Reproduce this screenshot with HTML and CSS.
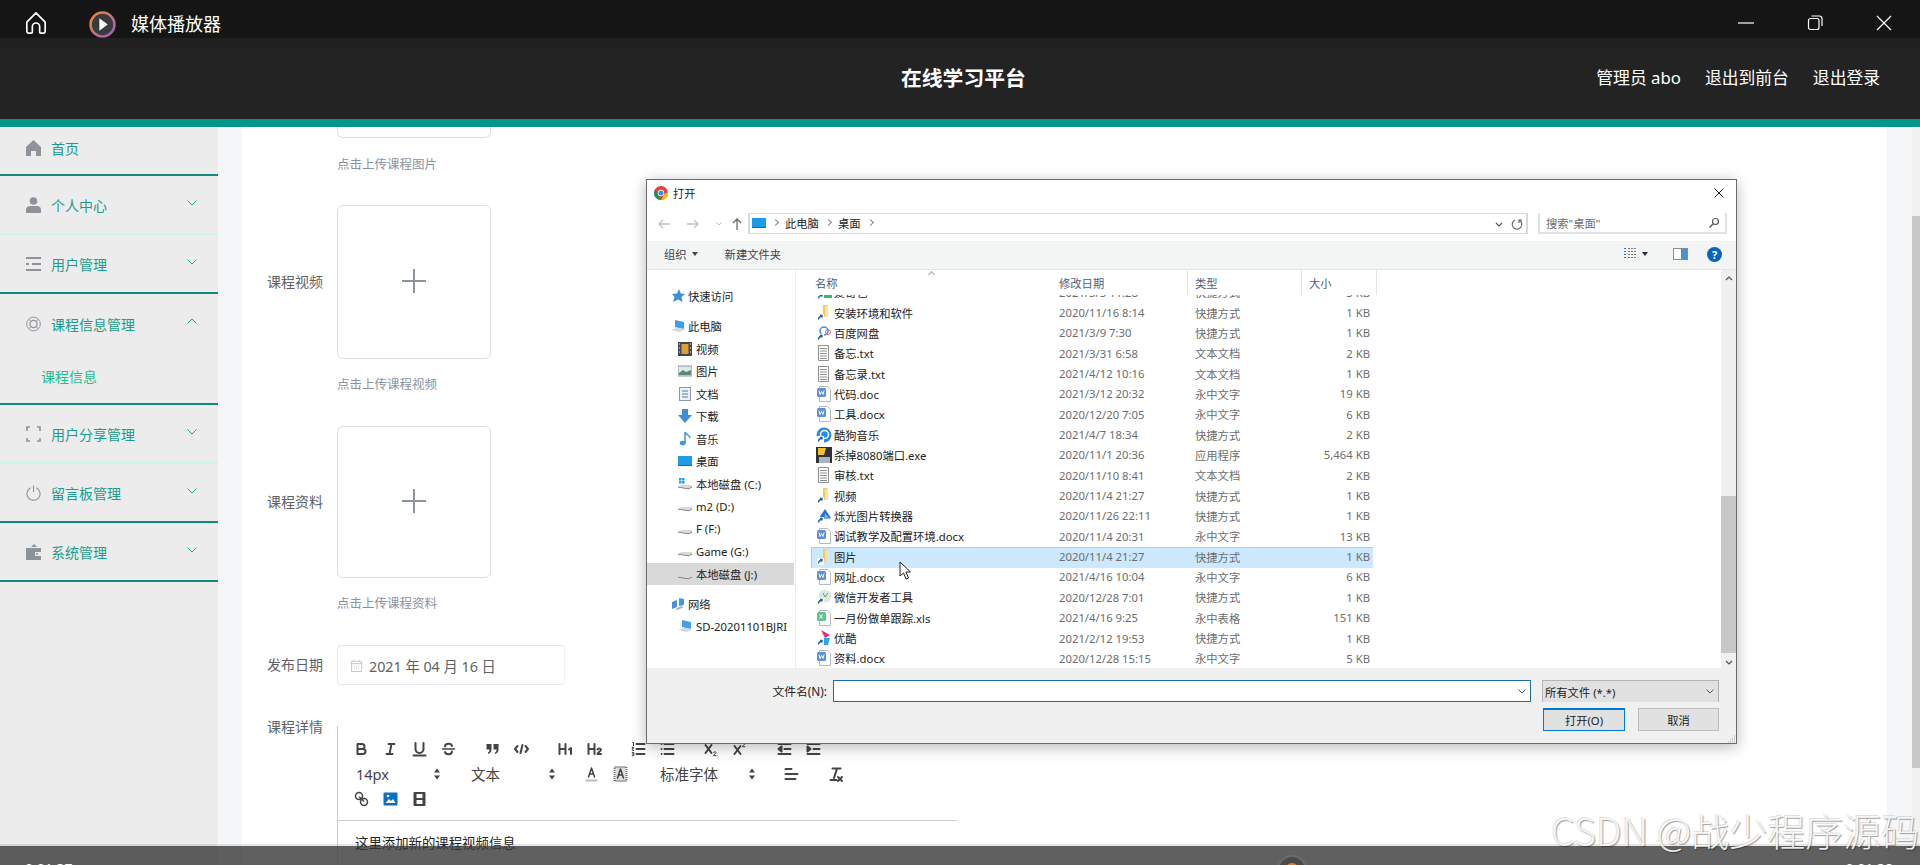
FILE: index.html
```html
<!DOCTYPE html>
<html lang="zh-CN">
<head>
<meta charset="utf-8">
<title>媒体播放器</title>
<link rel="stylesheet" href="styles.css">
</head>
<body>
<svg class="defs" width="0" height="0" aria-hidden="true">
  <symbol id="q-ol" viewBox="0 0 18 18"><path class="qs" d="M7 4h8M7 9h8M7 14h8"/><path class="qt" d="M3 2.500h1v3M2.600 7.500h1.600v1.200H2.800V10.400h1.500M2.700 12.500h1.600v3.200H2.700M2.900 14h1.300"/></symbol>
  <symbol id="q-ul" viewBox="0 0 18 18"><path class="qs" d="M6 4h9M6 9h9M6 14h9M3 4h.01M3 9h.01M3 14h.01"/></symbol>
  <symbol id="q-updown" viewBox="0 0 18 18"><path class="qf" d="M9 3.500l3 4H6zM9 14.500l-3-4h6z"/></symbol>
  <symbol id="f-short" viewBox="0 0 16 16"><path fill="#f3c95f" d="M7 0h4l1 1v11H7z"/><path fill="#fbe39c" d="M9 1h3v11H9z"/><rect x="1" y="9" width="7" height="7" fill="#fff"/><path d="M2.500 14.500c0-2 1-3 3-3M4 10.500h2v2" fill="none" stroke="#1c5fb0" stroke-width="1.300"/></symbol>
  <symbol id="f-word" viewBox="0 0 16 16"><path fill="#fff" stroke="#b4bac4" d="M3.500 .5h8l3 3v12h-11z"/><rect x="1" y="2" width="9" height="9" rx="1.500" fill="#5b8fe0"/><path d="M3 4.500l1 4 1.500-3 1.500 3 1-4" fill="none" stroke="#fff"/></symbol>
  <symbol id="f-xls" viewBox="0 0 16 16"><path fill="#fff" stroke="#b4bac4" d="M3.500 .5h8l3 3v12h-11z"/><rect x="1" y="2" width="9" height="9" rx="1.500" fill="#62c28e"/><path d="M3.500 4.500l3 4M6.500 4.500l-3 4" stroke="#fff"/></symbol>
  <symbol id="f-txt" viewBox="0 0 16 16"><path fill="#fff" stroke="#8f8f8f" d="M2.500 .5h10v15h-10z"/><path stroke="#8f8f8f" d="M4 3.500h7M4 6h7M4 8.500h7M4 11h7M4 13.500h7"/></symbol>
  <symbol id="f-lnk" viewBox="0 0 16 16"><rect x="1" y="9" width="7" height="7" fill="#fff"/><path d="M2.500 14.500c0-2 1-3 3-3M4 10.500h2v2" fill="none" stroke="#1c5fb0" stroke-width="1.300"/></symbol>
  <symbol id="d-drive" viewBox="0 0 16 16"><path fill="#d9d9d9" d="M0 11l4-2h12v3l-4 2z"/><path fill="#6d6d6d" d="M0 11l12 2 4-2v1l-4 2-12-2z"/></symbol>
  <symbol id="m-home" viewBox="0 0 15 16"><path fill="#8e929b" d="M7.500 0L15 7v9h-5v-5H5v5H0V7z"/></symbol>
  <symbol id="m-chev" viewBox="0 0 10 6"><path d="M.5.500l4.500 4.500 4.500-4.500" fill="none" stroke="#18a294"/></symbol>
</svg>

<div class="app">
  <div class="titlebar">
    <svg class="tb-home" viewBox="0 0 24 26"><path d="M2 12L12 2l10 10v10a2 2 0 0 1-2 2h-3a1 1 0 0 1-1-1v-6a4 4 0 0 0-8 0v6a1 1 0 0 1-1 1H4a2 2 0 0 1-2-2z" fill="none" stroke="#fff" stroke-width="1.800" stroke-linejoin="round"/></svg>
    <svg class="tb-logo" viewBox="0 0 26 26"><defs><linearGradient id="lg" x1="0" y1="0" x2="1" y2="1"><stop offset="0" stop-color="#f08a2c"/><stop offset="1" stop-color="#9a5ac8"/></linearGradient></defs><circle cx="13" cy="13" r="11.500" fill="#3a3a3e" stroke="url(#lg)" stroke-width="2.500"/><path d="M10 7l8 6-8 6z" fill="#fff"/></svg>
    <span class="tb-title">媒体播放器</span>
    <div class="tb-controls">
      <svg class="tb-ctl" viewBox="0 0 16 16"><path d="M0 8h16" stroke="#fff" stroke-width="1.200"/></svg>
      <svg class="tb-ctl" viewBox="0 0 16 16"><rect x="1.500" y="3.500" width="10.500" height="11" rx="2" fill="none" stroke="#fff" stroke-width="1.200"/><path d="M4.500 1h8a2.500 2.500 0 0 1 2.500 2.500V11" fill="none" stroke="#fff" stroke-width="1.200"/></svg>
      <svg class="tb-ctl" viewBox="0 0 16 16"><path d="M1 1l14 14M15 1L1 15" stroke="#fff" stroke-width="1.200"/></svg>
    </div>
  </div>
  <div class="strip"></div>
  <header class="site-header">
    <div class="site-title">在线学习平台</div>
    <nav class="site-links">
      <span>管理员 abo</span><span>退出到前台</span><span>退出登录</span>
    </nav>
  </header>
  <div class="teal"></div>

  <div class="body-row">
    <aside class="sidebar">
      <div class="menu-item first line-teal"><svg class="m-ico"><use href="#m-home"/></svg><span>首页</span></div>
      <div class="menu-item line-pale"><svg class="m-ico" viewBox="0 0 15 16"><circle cx="7.500" cy="4" r="3.800" fill="#8e929b"/><path d="M0 16v-3c0-3 2-4 4-4h7c2 0 4 1 4 4v3z" fill="#8e929b"/></svg><span>个人中心</span><svg class="chev"><use href="#m-chev"/></svg></div>
      <div class="menu-item line-teal"><svg class="m-ico" viewBox="0 0 15 16"><path d="M0 2h15M6 8h9M0 14h15M0 8h3" stroke="#8e929b" stroke-width="2"/></svg><span>用户管理</span><svg class="chev"><use href="#m-chev"/></svg></div>
      <div class="menu-group line-teal">
        <div class="menu-item bare"><svg class="m-ico" viewBox="0 0 16 16"><circle cx="8" cy="8" r="7.300" fill="none" stroke="#8e929b"/><circle cx="8" cy="8" r="3.800" fill="none" stroke="#8e929b" stroke-width="1.400"/><path d="M3 3l2.500 2.500M13 3l-2.500 2.500M3 13l2.500-2.500M13 13l-2.500-2.500" stroke="#8e929b"/></svg><span>课程信息管理</span><svg class="chev up"><use href="#m-chev"/></svg></div>
        <div class="menu-sub">课程信息</div>
      </div>
      <div class="menu-item line-pale"><svg class="m-ico" viewBox="0 0 15 16"><path d="M1 5V1h3M11 1h3v4M14 12v3h-3M4 15H1v-3" fill="none" stroke="#8e929b" stroke-width="1.600"/></svg><span>用户分享管理</span><svg class="chev"><use href="#m-chev"/></svg></div>
      <div class="menu-item line-teal"><svg class="m-ico" viewBox="0 0 16 16"><path d="M5 2.500a7 7 0 1 0 6 0M8 0v7" fill="none" stroke="#8e929b" stroke-width="1.200"/></svg><span>留言板管理</span><svg class="chev"><use href="#m-chev"/></svg></div>
      <div class="menu-item line-teal"><svg class="m-ico" viewBox="0 0 15 16"><path d="M0 4h15v12H0zM5 3l3-3 3 3z" fill="#8e929b"/><rect x="9" y="8" width="6" height="4" fill="#ececec"/><circle cx="11" cy="10" r="1" fill="#8e929b"/></svg><span>系统管理</span><svg class="chev"><use href="#m-chev"/></svg></div>
    </aside>
    <div class="gutter"></div>
    <main class="main">
      <form class="form">
        <div class="upload cut"></div>
        <div class="tip first-tip">点击上传课程图片</div>

        <div class="field">
          <label class="label">课程视频</label>
          <div class="upload"><svg class="plus" viewBox="0 0 24 24"><path d="M12 0v24M0 12h24" stroke="#8c939d" stroke-width="2"/></svg></div>
        </div>
        <div class="tip">点击上传课程视频</div>

        <div class="field">
          <label class="label">课程资料</label>
          <div class="upload short"><svg class="plus" viewBox="0 0 24 24"><path d="M12 0v24M0 12h24" stroke="#8c939d" stroke-width="2"/></svg></div>
        </div>
        <div class="tip">点击上传课程资料</div>

        <div class="field date-field">
          <label class="label">发布日期</label>
          <div class="date-input">
            <svg class="cal" viewBox="0 0 14 14"><path d="M1.500 2.500h11v11h-11zM1.500 5h11M4 1v2M10 1v2M4 7.500h1M6.500 7.500h1M9 7.500h1M4 10h1M6.500 10h1M9 10h1" fill="none" stroke="#c0c4cc"/></svg>
            <span>2021 年 04 月 16 日</span>
          </div>
        </div>

        <div class="field detail-field">
          <label class="label">课程详情</label>
          <div class="editor">
            <div class="toolbar">
              <div class="tb-row">
                <div class="ql-group">
                  <svg class="qb" viewBox="0 0 18 18"><path class="qs" d="M5 4h4.500a2.500 2.500 0 0 1 0 5H5zM5 9h5.500a2.500 2.500 0 0 1 0 5H5z"/></svg>
                  <svg class="qb" viewBox="0 0 18 18"><path class="qs" d="M7 4h6M5 14h6M10 4L8 14"/></svg>
                  <svg class="qb" viewBox="0 0 18 18"><path class="qs" d="M5 3v6a4 4 0 0 0 8 0V3M3 15.500h12"/></svg>
                  <svg class="qb" viewBox="0 0 18 18"><path class="qn" d="M3 9h12"/><path class="qs" d="M12.500 6C12.200 4.500 11 3.800 9 3.800S5.500 4.800 5.500 6.500M12.500 11.500c0 1.700-1.500 2.700-3.500 2.700s-3.200-.7-3.500-2.200"/></svg>
                </div>
                <div class="ql-group">
                  <svg class="qb" viewBox="0 0 18 18"><path class="qf" d="M3 4h5v5.500c0 2-1 4-3.500 4.500v-1.500c1-.4 1.500-1.300 1.500-3H3zM10 4h5v5.500c0 2-1 4-3.500 4.500v-1.500c1-.4 1.500-1.300 1.500-3h-3z"/></svg>
                  <svg class="qb" viewBox="0 0 18 18"><path class="qs" d="M5 6L2.500 9 5 12M13 6l2.500 3L13 12M10 5L8 13"/></svg>
                </div>
                <div class="ql-group">
                  <svg class="qb" viewBox="0 0 18 18"><path class="qs" d="M3 4v10M9 4v10M3 9h6M12.500 9.500l2-1.500v6"/></svg>
                  <svg class="qb" viewBox="0 0 18 18"><path class="qs" d="M3 4v10M9 4v10M3 9h6M12 9.500c.3-1.500 3.500-1.500 3.500.3 0 1.500-3.500 2.500-3.500 4.200h3.500"/></svg>
                </div>
                <div class="ql-group">
                  <svg class="qb"><use href="#q-ol"/></svg>
                  <svg class="qb"><use href="#q-ul"/></svg>
                </div>
                <div class="ql-group">
                  <svg class="qb" viewBox="0 0 18 18"><path class="qs" d="M3 5l6 8M9 5l-6 8"/><path class="qt" d="M11 12.500c.3-1 2.500-1 2.500.2 0 1-2.500 1.500-2.500 3h2.500"/></svg>
                  <svg class="qb" viewBox="0 0 18 18"><path class="qs" d="M3 6l6 8M9 6l-6 8"/><path class="qt" d="M11 3.500c.3-1 2.500-1 2.500.2 0 1-2.500 1.500-2.500 3h2.500"/></svg>
                </div>
                <div class="ql-group">
                  <svg class="qb" viewBox="0 0 18 18"><path class="qs" d="M3 4h12M3 14h12M9 9h6M6 6.500L3 9l3 2.500z"/></svg>
                  <svg class="qb" viewBox="0 0 18 18"><path class="qs" d="M3 4h12M3 14h12M9 9h6M3 6.500L6 9l-3 2.500z"/></svg>
                </div>
              </div>
              <div class="tb-row">
                <div class="ql-group"><div class="picker"><span>14px</span><svg class="pk-ar"><use href="#q-updown"/></svg></div></div>
                <div class="ql-group"><div class="picker"><span>文本</span><svg class="pk-ar"><use href="#q-updown"/></svg></div></div>
                <div class="ql-group">
                  <svg class="qb" viewBox="0 0 18 18"><path class="qn" d="M6 12l3-9 3 9M7 9h4"/><rect x="3" y="14.500" width="12" height="2" fill="#bbb"/></svg>
                  <svg class="qb" viewBox="0 0 18 18"><path d="M3 2h12v14H3z" fill="#ddd" stroke="#777" stroke-dasharray="1 1" stroke-width="2"/><path class="qn" d="M6 13l3-9 3 9M7 10h4"/></svg>
                </div>
                <div class="ql-group"><div class="picker wide"><span>标准字体</span><svg class="pk-ar"><use href="#q-updown"/></svg></div></div>
                <div class="ql-group"><svg class="qb" viewBox="0 0 18 18"><path class="qs" d="M3 4h6M3 9h12M3 14h10"/></svg></div>
                <div class="ql-group"><svg class="qb" viewBox="0 0 18 18"><path class="qs" d="M6 3.500h8M10.500 3.500L7.500 13M4 15h6M11.500 12l4 4M15.500 12l-4 4"/></svg></div>
              </div>
              <div class="tb-row">
                <div class="ql-group">
                  <svg class="qb" viewBox="0 0 18 18"><circle cx="6.500" cy="6" r="3.500" class="qn"/><circle cx="11.500" cy="12" r="3.500" class="qn"/><path class="qn" d="M7 7l4 4"/></svg>
                  <svg class="qb" viewBox="0 0 18 18"><rect x="2" y="2.500" width="14" height="13" rx="1" fill="#0b6fc6"/><path d="M4 13l3.500-4 2 2 2-2 2.500 4z" fill="#fff"/><circle cx="6.500" cy="6" r="1.300" fill="#fff"/></svg>
                  <svg class="qb" viewBox="0 0 18 18"><rect x="3" y="2" width="12" height="14" rx="1" fill="#444"/><rect x="6" y="4" width="6" height="4" fill="#fff"/><rect x="6" y="10" width="6" height="4" fill="#fff"/></svg>
                </div>
              </div>
            </div>
            <div class="editor-body">这里添加新的课程视频信息</div>
          </div>
        </div>
      </form>
    </main>
    <div class="gutter right"></div>
    <div class="page-scroll"><div class="page-thumb"></div></div>
  </div>

  <section class="dialog">
    <div class="dlg-title">
      <svg class="chrome" viewBox="0 0 14 14"><circle cx="7" cy="7" r="7" fill="#db4437"/><path d="M7 14A7 7 0 0 1 1 3.500L4.500 9.500z" fill="#0f9d58"/><path d="M7 14l3.500-6L14 6a7 7 0 0 1-7 8z" fill="#f4c20d"/><circle cx="7" cy="7" r="3.200" fill="#fff"/><circle cx="7" cy="7" r="2.500" fill="#4285f4"/></svg>
      <span>打开</span>
      <svg class="dlg-x" viewBox="0 0 10 10"><path d="M.5.500l9 9M9.500.500l-9 9" stroke="#222"/></svg>
    </div>
    <div class="dlg-addr">
      <div class="addr-nav">
        <svg class="an" viewBox="0 0 14 12"><path d="M13 6H2M6 2L2 6l4 4" fill="none" stroke="#c4c4c4" stroke-width="1.300"/></svg>
        <svg class="an" viewBox="0 0 14 12"><path d="M1 6h11M8 2l4 4-4 4" fill="none" stroke="#c4c4c4" stroke-width="1.300"/></svg>
        <svg class="an small" viewBox="0 0 8 5"><path d="M1 1l3 3 3-3" fill="none" stroke="#c4c4c4"/></svg>
        <svg class="an" viewBox="0 0 14 14"><path d="M7 13V2M3 6l4-4 4 4" fill="none" stroke="#6a6a6a" stroke-width="1.300"/></svg>
      </div>
      <div class="addr-box">
        <svg class="pc" viewBox="0 0 14 10"><rect width="14" height="9" fill="#1e9be8"/><rect y="9" width="14" height="1" fill="#0d6fb3"/></svg>
        <i class="sep"></i><span>此电脑</span><i class="sep"></i><span>桌面</span><i class="sep"></i>
        <svg class="addr-drop" viewBox="0 0 8 5"><path d="M1 1l3 3 3-3" fill="none" stroke="#555" stroke-width="1.200"/></svg>
        <svg class="addr-ref" viewBox="0 0 12 12"><path d="M4 2a4.800 4.800 0 1 0 4 0M8 5V2h3" fill="none" stroke="#666" stroke-width="1.200"/></svg>
      </div>
      <div class="search-box"><span>搜索"桌面"</span><svg class="mag" viewBox="0 0 12 12"><circle cx="7.500" cy="4.500" r="3" fill="none" stroke="#555" stroke-width="1.200"/><path d="M5 7l-3.500 3.500" stroke="#555" stroke-width="1.500"/></svg></div>
    </div>
    <div class="dlg-tools">
      <span class="tool">组织<i class="caret"></i></span>
      <span class="tool new">新建文件夹</span>
      <div class="tool-right">
        <svg class="vw" viewBox="0 0 14 14"><path d="M4 1.500h9M4 4.500h9M4 7.500h9M4 10.500h9" stroke="#777" stroke-dasharray="2 1"/><path d="M0 1.500h2M0 7.500h2" stroke="#3a6ea5"/><path d="M0 4.500h2M0 10.500h2" stroke="#c04040"/></svg>
        <i class="caret dark"></i>
        <svg class="pane" viewBox="0 0 15 12"><rect x=".5" y=".5" width="14" height="11" fill="#fff" stroke="#8a8a8a"/><rect x="8" y="1" width="6" height="10" fill="#4a90d9"/></svg>
        <span class="help">?</span>
      </div>
    </div>
    <div class="dlg-main">
      <div class="dlg-nav">
        <div class="nv top"><svg class="nv-i" viewBox="0 0 14 14"><path d="M8 0l1.800 4.500L14 5l-3.500 3 1 5L7 10.500 2 13l1.500-5L1 5l5-.5z" fill="#3d8fd8"/></svg><span>快速访问</span></div>
        <div class="nv top gap"><svg class="nv-i" viewBox="0 0 14 14"><path d="M4 1l9 2v7l-9-2z" fill="#3da0e8"/><path d="M0 11l6-2 8 1-5 3z" fill="#cfd6dc"/></svg><span>此电脑</span></div>
        <div class="nv"><svg class="nv-d" viewBox="0 0 14 14"><rect width="14" height="14" fill="#3d4a55"/><rect x="3.500" y="2" width="7" height="10" fill="#e0a030"/><path d="M1 2h1M1 6h1M1 10h1M12 2h1M12 6h1M12 10h1" stroke="#fff"/></svg><span>视频</span></div>
        <div class="nv"><svg class="nv-d" viewBox="0 0 14 14"><rect y="2" width="14" height="10" fill="#dfe7ee" stroke="#8f9aa5"/><path d="M1 9l4-3 3 2 5-2v5H1z" fill="#5c8a6e"/></svg><span>图片</span></div>
        <div class="nv"><svg class="nv-d" viewBox="0 0 14 14"><rect x="1.500" y=".5" width="11" height="13" fill="#eef2f4" stroke="#8f9aa5"/><path d="M4 4h6M4 7h6M4 10h6" stroke="#3f7fb5"/></svg><span>文档</span></div>
        <div class="nv"><svg class="nv-d" viewBox="0 0 14 14"><path d="M4 0h6v6h4l-7 8-7-8h4z" fill="#3d8fd8"/></svg><span>下载</span></div>
        <div class="nv"><svg class="nv-d" viewBox="0 0 14 14"><path d="M7 0v10.500M7 0c1 3 5 3 5 6" fill="none" stroke="#3d9be0" stroke-width="1.500"/><ellipse cx="4.800" cy="11" rx="3" ry="2.300" fill="#3d9be0"/></svg><span>音乐</span></div>
        <div class="nv"><svg class="nv-d" viewBox="0 0 14 14"><rect y="2" width="14" height="9" fill="#1e9be8"/><rect y="11" width="14" height="1" fill="#0d6fb3"/></svg><span>桌面</span></div>
        <div class="nv"><svg class="nv-d" viewBox="0 0 14 14"><use href="#d-drive"/><path d="M1 1h2.500v2.500H1zM4 1h2.500v2.500H4zM1 4h2.500v2.500H1zM4 4h2.500v2.500H4z" fill="#1fa0e0"/></svg><span>本地磁盘 (C:)</span></div>
        <div class="nv"><svg class="nv-d"><use href="#d-drive"/></svg><span>m2 (D:)</span></div>
        <div class="nv"><svg class="nv-d"><use href="#d-drive"/></svg><span>F (F:)</span></div>
        <div class="nv"><svg class="nv-d"><use href="#d-drive"/></svg><span>Game (G:)</span></div>
        <div class="nv active"><svg class="nv-d"><use href="#d-drive"/></svg><span>本地磁盘 (J:)</span></div>
        <div class="nv top gap2"><svg class="nv-i" viewBox="0 0 14 14"><path d="M1 5l5-2v7l-5 2z" fill="#4a90d9"/><path d="M8 1l5 1v6l-5 1z" fill="#3d9be0"/><path d="M4 12l6-3 3 1-6 3z" fill="#a8b6c2"/></svg><span>网络</span></div>
        <div class="nv"><svg class="nv-d" viewBox="0 0 14 14"><path d="M4 1l9 2v7l-9-2z" fill="#3da0e8"/><path d="M0 11l6-2 8 1-5 3z" fill="#cfd6dc"/></svg><span class="clip">SD-20201101BJRI</span></div>
      </div>
      <div class="dlg-list">
        <div class="list-head">
          <i class="sort"></i>
          <span class="hc c-name">名称</span><span class="hc c-date">修改日期</span><span class="hc c-type">类型</span><span class="hc c-size">大小</span>
        </div>
        <div class="rows">
          <div class="row cutrow"><svg class="fi" viewBox="0 0 16 16"><rect x="2" y="5" width="14" height="9" fill="#2fc25b"/><use href="#f-lnk"/></svg><span class="rn">爱奇艺</span><span class="rd">2021/3/3 11:28</span><span class="rt">快捷方式</span><span class="rs">3 KB</span></div>
          <div class="row"><svg class="fi"><use href="#f-short"/></svg><span class="rn">安装环境和软件</span><span class="rd">2020/11/16 8:14</span><span class="rt">快捷方式</span><span class="rs">1 KB</span></div>
          <div class="row"><svg class="fi" viewBox="0 0 16 16"><circle cx="8" cy="6" r="4" fill="none" stroke="#3a8ee6" stroke-width="1.500"/><circle cx="12" cy="7" r="2.500" fill="none" stroke="#e0605a"/><use href="#f-lnk"/></svg><span class="rn">百度网盘</span><span class="rd">2021/3/9 7:30</span><span class="rt">快捷方式</span><span class="rs">1 KB</span></div>
          <div class="row"><svg class="fi"><use href="#f-txt"/></svg><span class="rn">备忘.txt</span><span class="rd">2021/3/31 6:58</span><span class="rt">文本文档</span><span class="rs">2 KB</span></div>
          <div class="row"><svg class="fi"><use href="#f-txt"/></svg><span class="rn">备忘录.txt</span><span class="rd">2021/4/12 10:16</span><span class="rt">文本文档</span><span class="rs">1 KB</span></div>
          <div class="row"><svg class="fi"><use href="#f-word"/></svg><span class="rn">代码.doc</span><span class="rd">2021/3/12 20:32</span><span class="rt">永中文字</span><span class="rs">19 KB</span></div>
          <div class="row"><svg class="fi"><use href="#f-word"/></svg><span class="rn">工具.docx</span><span class="rd">2020/12/20 7:05</span><span class="rt">永中文字</span><span class="rs">6 KB</span></div>
          <div class="row"><svg class="fi" viewBox="0 0 16 16"><circle cx="8" cy="8" r="7.500" fill="#2b8be6"/><circle cx="8.500" cy="7.500" r="4" fill="none" stroke="#fff" stroke-width="1.500"/><use href="#f-lnk"/></svg><span class="rn">酷狗音乐</span><span class="rd">2021/4/7 18:34</span><span class="rt">快捷方式</span><span class="rs">2 KB</span></div>
          <div class="row"><svg class="fi" viewBox="0 0 16 16"><rect width="16" height="16" fill="#30343a"/><path d="M2 1h8l-2 7H2z" fill="#f2c230"/><rect x="3" y="10" width="11" height="6" fill="#aab4c0"/></svg><span class="rn">杀掉8080端口.exe</span><span class="rd">2020/11/1 20:36</span><span class="rt">应用程序</span><span class="rs">5,464 KB</span></div>
          <div class="row"><svg class="fi"><use href="#f-txt"/></svg><span class="rn">审核.txt</span><span class="rd">2020/11/10 8:41</span><span class="rt">文本文档</span><span class="rs">2 KB</span></div>
          <div class="row"><svg class="fi"><use href="#f-short"/></svg><span class="rn">视频</span><span class="rd">2020/11/4 21:27</span><span class="rt">快捷方式</span><span class="rs">1 KB</span></div>
          <div class="row"><svg class="fi" viewBox="0 0 16 16"><path d="M9 1l6 9H3z" fill="#2f6fd0"/><path d="M9 5l5 6H8z" fill="#68b0f0"/><use href="#f-lnk"/></svg><span class="rn">烁光图片转换器</span><span class="rd">2020/11/26 22:11</span><span class="rt">快捷方式</span><span class="rs">1 KB</span></div>
          <div class="row"><svg class="fi"><use href="#f-word"/></svg><span class="rn">调试教学及配置环境.docx</span><span class="rd">2020/11/4 20:31</span><span class="rt">永中文字</span><span class="rs">13 KB</span></div>
          <div class="row selected"><svg class="fi"><use href="#f-short"/></svg><span class="rn">图片</span><span class="rd">2020/11/4 21:27</span><span class="rt">快捷方式</span><span class="rs">1 KB</span></div>
          <div class="row"><svg class="fi"><use href="#f-word"/></svg><span class="rn">网址.docx</span><span class="rd">2021/4/16 10:04</span><span class="rt">永中文字</span><span class="rs">6 KB</span></div>
          <div class="row"><svg class="fi" viewBox="0 0 16 16"><circle cx="9" cy="7" r="6.500" fill="#dfe7e2"/><path d="M7 4l2 4 3-4" fill="none" stroke="#3cb371"/><use href="#f-lnk"/></svg><span class="rn">微信开发者工具</span><span class="rd">2020/12/28 7:01</span><span class="rt">快捷方式</span><span class="rs">1 KB</span></div>
          <div class="row"><svg class="fi"><use href="#f-xls"/></svg><span class="rn">一月份做单跟踪.xls</span><span class="rd">2021/4/16 9:25</span><span class="rt">永中表格</span><span class="rs">151 KB</span></div>
          <div class="row"><svg class="fi" viewBox="0 0 16 16"><path d="M5 0l9 5-5 3z" fill="#ec2d7a"/><path d="M8 8l6 0-2 7H7z" fill="#2aa5f0"/><use href="#f-lnk"/></svg><span class="rn">优酷</span><span class="rd">2021/2/12 19:53</span><span class="rt">快捷方式</span><span class="rs">1 KB</span></div>
          <div class="row"><svg class="fi"><use href="#f-word"/></svg><span class="rn">资料.docx</span><span class="rd">2020/12/28 15:15</span><span class="rt">永中文字</span><span class="rs">5 KB</span></div>
        </div>
      </div>
      <div class="dlg-scroll">
        <svg class="sb-ar" viewBox="0 0 8 5"><path d="M1 4l3-3 3 3" fill="none" stroke="#555" stroke-width="1.200"/></svg>
        <div class="sb-thumb"></div>
        <svg class="sb-ar" viewBox="0 0 8 5"><path d="M1 1l3 3 3-3" fill="none" stroke="#555" stroke-width="1.200"/></svg>
      </div>
    </div>
    <div class="dlg-foot">
      <div class="foot-row">
        <label class="fn-label">文件名(N):</label>
        <div class="fn-input"><svg class="fn-drop" viewBox="0 0 8 5"><path d="M.5.500L4 4 7.500.500" fill="none" stroke="#555"/></svg></div>
        <div class="fn-filter"><span>所有文件 (*.*)</span><svg class="fn-drop" viewBox="0 0 8 5"><path d="M.5.500L4 4 7.500.500" fill="none" stroke="#555"/></svg></div>
      </div>
      <div class="foot-btns">
        <button class="btn primary" type="button">打开(O)</button>
        <button class="btn" type="button">取消</button>
      </div>
      <svg class="grip" viewBox="0 0 8 8"><path d="M6 1h1M4 3h1M6 3h1M2 5h1M4 5h1M6 5h1M0 7h1M2 7h1M4 7h1M6 7h1" stroke="#aaa"/></svg>
    </div>
  </section>

  <svg class="cursor" viewBox="0 0 12 19"><path d="M1 1v14l3.500-3 2.500 6 2.500-1-2.500-6h4.500z" fill="#fff" stroke="#222"/></svg>

  <div class="player-bar">
    <span>0:01:37</span>
    <span>0:01:38</span>
    <div class="knob"><i></i></div>
  </div>
  <div class="watermark">CSDN @战少程序源码</div>
</div>
</body>
</html>
```
FILE: styles.css
```css
* { box-sizing: border-box; }
html, body { margin: 0; height: 100%; overflow: hidden; }
body { font-family: "Noto Sans", "Noto Sans CJK SC", sans-serif; background: #fff; }
.defs { position: absolute; }
.qs, .qn, .qt { fill: none; stroke: #444; stroke-linecap: round; stroke-linejoin: round; }
.qs { stroke-width: 2; }
.qn { stroke-width: 1.500; }
.qt { stroke-width: 1; }
.qf { fill: #444; }

.app { position: relative; width: 1920px; height: 865px; display: flex; flex-direction: column; overflow: hidden; }

/* window title bar */
.titlebar { height: 38px; flex: none; background: #151515; display: flex; align-items: center; padding-left: 25px; color: #fff; }
.tb-home { width: 22px; height: 24px; margin-top: 8px; }
.tb-logo { width: 27px; height: 27px; margin: 10px 0 0 42px; }
.tb-title { font-size: 18px; margin: 8px 0 0 15px; }
.tb-controls { margin-left: auto; margin-top: 8px; display: flex; gap: 53px; padding-right: 28px; }
.tb-ctl { width: 16px; height: 16px; }
.strip { height: 10px; flex: none; background: #202020; }

/* site header */
.site-header { height: 71px; flex: none; background: #232323; color: #fff; display: flex; align-items: center; position: relative; padding-bottom: 13px; }
.site-title { position: absolute; left: 901px; font-size: 20.800px; font-weight: 700; }
.site-links { margin-left: auto; display: flex; gap: 24px; padding-right: 40px; font-size: 16.800px; }
.teal { height: 8px; flex: none; background: #05968a; }

.body-row { flex: 1; display: flex; min-height: 0; }

/* sidebar */
.sidebar { width: 218px; flex: none; background: #ececec; }
.menu-item { height: 59px; display: flex; align-items: center; padding: 1px 0 0 26px; font-size: 14px; color: #1a9c8e; position: relative; }
.menu-item.first { height: 49px; padding-top: 0; padding-bottom: 6px; }
.menu-item.bare { height: 59px; }
.line-teal { border-bottom: 2px solid #12877c; }
.line-pale { border-bottom: 2px solid #c8f5ee; }
.m-ico { width: 15px; height: 16px; margin-right: 10px; flex: none; }
.chev { width: 10px; height: 6px; position: absolute; right: 21px; top: 24px; }
.chev.up { transform: rotate(180deg); }
.menu-sub { height: 50px; padding: 0 0 0 41px; font-size: 14px; color: #1ec08c; line-height: 48px; }

.gutter { width: 24px; flex: none; background: #f5f6f8; }
.gutter.right { width: 25px; }
.page-scroll { width: 8px; flex: none; background: #f1f1f1; padding-top: 89px; }
.page-thumb { height: 552px; background: #c8c8c8; }

/* main form */
.main { flex: 1; background: #fff; overflow: hidden; }
.form { padding-left: 25px; font-size: 14px; color: #606266; }
.field { display: flex; align-items: center; }
.label { width: 70px; flex: none; font-size: 14px; color: #606266; }
.upload { width: 154px; height: 154px; border: 1px solid #dcdfe6; border-radius: 6px; background: #fff; display: flex; align-items: center; justify-content: center; }
.upload.short { height: 152px; }
.upload.cut { height: 11px; margin-left: 70px; border-top: 0; border-radius: 0 0 6px 6px; }
.plus { width: 24px; height: 24px; margin-top: -2px; }
.tip { margin: 6px 0 21px 70px; height: 40px; line-height: 40px; font-size: 12.500px; color: #8a929f; }
.first-tip { margin-top: 7px; margin-bottom: 20px; }
.date-field { margin-top: 2px; }
.date-input { width: 228px; height: 40px; border: 1px solid #e4e7ed; border-right-color: #f0f0f0; border-radius: 4px; display: flex; align-items: center; padding-left: 12px; }
.cal { width: 13px; height: 13px; margin-right: 6px; }
.date-input span { font-size: 14.300px; color: #606266; white-space: nowrap; }

.detail-field { align-items: flex-start; margin-top: 41px; }
.label, .editor { line-height: 1.200; }
.detail-field .label { line-height: 1; margin-top: -6px; }
.editor { border-left: 1px solid #ccc; width: 620px; margin-left: 0; height: 200px; }
.toolbar { padding: 10.500px 0 8px 9px; border-bottom: 1px solid #ccc; }
.tb-row { height: 25px; display: flex; align-items: center; }
.ql-group { display: flex; align-items: center; margin-right: 15px; }
.qb { width: 29px; height: 18px; flex: none; }
.picker { width: 100px; height: 20px; position: relative; font-size: 14.500px; color: #444; padding-left: 9px; line-height: 20px; }
.picker.wide { width: 112px; padding-left: 10px; }
.pk-ar { width: 18px; height: 18px; position: absolute; right: 1px; top: 1px; }
.editor-body { padding: 14px 0 0 17px; font-size: 13.400px; color: #222; white-space: nowrap; }

/* Windows file dialog */
.dialog { position: absolute; left: 646px; top: 179px; width: 1091px; height: 565px; background: #fff; border: 1px solid #6b6b6b; box-shadow: 0 3px 14px rgba(0,0,0,.28); display: flex; flex-direction: column; font-size: 11.300px; color: #222; }
.dlg-title { height: 33px; flex: none; display: flex; align-items: center; padding: 0 0 7px 7px; }
.chrome { width: 14px; height: 14px; margin-right: 5px; }
.dlg-x { width: 10px; height: 10px; margin-left: auto; margin-right: 12px; }
.dlg-addr { height: 21px; flex: none; display: flex; }
.addr-nav { width: 101px; display: flex; align-items: center; padding-left: 10px; }
.an { width: 14px; height: 14px; margin-right: 15px; flex: none; }
.an.small { width: 8px; height: 5px; margin-right: 7px; }
.addr-box { width: 780px; border: 1px solid #d9d9d9; border-width: 1px 2px; display: flex; align-items: center; padding: 0 0 2px 2px; position: relative; }
.pc { width: 14px; height: 10px; }
.sep { width: 5px; height: 5px; border: solid #888; border-width: 1px 1px 0 0; transform: rotate(45deg); margin: 0 7px; flex: none; }
.addr-drop { width: 8px; height: 5px; position: absolute; right: 23px; top: 8px; }
.addr-ref { width: 12px; height: 12px; position: absolute; right: 3px; top: 4px; }
.search-box { width: 189px; margin-left: 10px; border: 2px solid #dfe3e8; border-top: 0; display: flex; align-items: center; padding-left: 6px; color: #6d6d6d; }
.mag { width: 12px; height: 12px; margin-left: auto; margin-right: 5px; }

.dlg-tools { height: 29px; flex: none; margin-top: 7px; background: #f3f5f5; border-bottom: 1px solid #e4e6e6; display: flex; align-items: center; padding: 0 0 2px 17px; color: #3a4250; }
.tool { display: flex; align-items: center; white-space: nowrap; }
.new { margin-left: 27px; }
.caret { width: 0; height: 0; border: 3.500px solid transparent; border-top: 4px solid #444; border-bottom: 0; margin-left: 5px; }
.caret.dark { border-top-color: #1a2a50; margin-left: 7px; }
.tool-right { margin-left: auto; display: flex; align-items: center; padding-right: 14px; }
.vw { width: 14px; height: 14px; margin-right: -3px; }
.pane { width: 15px; height: 12px; margin-left: 25px; }
.help { width: 15px; height: 15px; border-radius: 50%; background: #0a64c2; color: #fff; font-size: 11px; font-weight: 700; line-height: 15px; text-align: center; margin-left: 19px; }

.dlg-main { flex: 1; display: flex; min-height: 0; background: #fff; }
.dlg-nav { width: 149px; flex: none; border-right: 1px solid #ededed; padding-top: 15px; overflow: hidden; }
.nv { height: 22.500px; display: flex; align-items: center; padding-left: 31px; white-space: nowrap; }
.nv.top { padding-left: 24px; }
.nv.gap { margin-top: 7.500px; }
.nv.gap2 { margin-top: 7.500px; }
.nv.active { background: #d9d9d9; margin-right: 1px; }
.nv-i { width: 14px; height: 14px; margin-right: 3px; flex: none; }
.nv-d { width: 14px; height: 14px; margin-right: 4px; flex: none; }
.clip { overflow: hidden; }

.dlg-list { flex: 1; min-width: 0; overflow: hidden; position: relative; }
.list-head { height: 25px; display: flex; position: relative; color: #4c607a; }
.hc { display: flex; align-items: center; height: 25px; border-right: 1px solid #e5e5e5; }
.c-name { width: 243px; padding-left: 19px; border-right: 0; }
.c-date { width: 149px; padding-left: 20px; }
.c-type { width: 114px; padding-left: 7px; }
.c-size { width: 75px; padding-left: 7px; }
.sort { position: absolute; left: 133px; top: 2px; width: 5px; height: 5px; border: solid #aaa; border-width: 1px 0 0 1px; transform: rotate(45deg); }
.rows { height: 374px; overflow: hidden; }
.row { width: 562px; height: 20.350px; margin-left: 15px; display: flex; align-items: center; padding: 0 0 3px 4px; white-space: nowrap; border: 1px solid transparent; border-width: 1px 0 0 1px; }
.cutrow { margin-top: -12px; }
.row.selected { background: #cce8ff; border-color: #99d1ff; }
.fi { width: 16px; height: 16px; margin-right: 2px; flex: none; }
.rn { width: 225px; flex: none; }
.rd { width: 136px; flex: none; color: #6d6d6d; }
.rt { width: 90px; flex: none; color: #6d6d6d; }
.rs { width: 85px; flex: none; color: #6d6d6d; text-align: right; }

.dlg-scroll { width: 15px; flex: none; background: #f0f0f0; display: flex; flex-direction: column; align-items: center; }
.sb-ar { width: 8px; height: 5px; margin-top: 6px; flex: none; }
.sb-thumb { width: 15px; height: 157px; background: #c8c8c8; margin-top: 215px; }
.dlg-scroll .sb-thumb + .sb-ar { margin-top: 7px; }

.dlg-foot { height: 75px; flex: none; background: #f0f0f0; padding-top: 12px; position: relative; }
.foot-row { display: flex; height: 22px; }
.fn-label { width: 180px; text-align: right; line-height: 22px; margin-right: 6px; flex: none; font-size: 11.800px; }
.fn-input { width: 698px; border: 1px solid #1c6ea4; background: #fff; display: flex; align-items: center; justify-content: flex-end; padding-right: 4px; }
.fn-filter { width: 177px; margin-left: 11px; background: #e1e1e1; border: 1px solid #b5b5b5; border-bottom: 0; border-right-color: #adadad; display: flex; align-items: center; padding-left: 2px; }
.fn-drop { width: 8px; height: 5px; flex: none; }
.fn-filter .fn-drop { margin-left: auto; margin-right: 4px; }
.foot-btns { display: flex; justify-content: flex-end; gap: 13px; margin-top: 6px; padding-right: 17px; }
.btn { width: 81px; height: 23px; padding: 0; background: #e1e1e1; border: 1px solid #bdbdbd; font: inherit; color: #222; }
.btn.primary { width: 82px; border: 1px solid #0078d7; border-top-width: 2px; }
.grip { position: absolute; right: 0; bottom: 0; width: 8px; height: 8px; }

.cursor { position: absolute; left: 899px; top: 561px; width: 12px; height: 19px; }

/* media player bar over the page */
.player-bar { position: absolute; left: 0; right: 0; bottom: 0; height: 21px; background: rgba(56,56,56,.8); border-top: 2px solid rgba(60,60,60,.12); background-clip: padding-box; color: #fff; font-size: 14px; line-height: 20px; display: flex; justify-content: space-between; padding: 13px 27px 0 25px; overflow: hidden; }
.knob { position: absolute; left: 1277px; top: 9px; width: 30px; height: 30px; border-radius: 50%; background: #4a4a4a; border: 2px solid #6b6b6b; }
.knob i { display: block; width: 14px; height: 14px; margin: 6px auto; border-radius: 50%; background: #f07a20; }

.watermark { position: absolute; left: 1551px; top: 805px; font-size: 38px; line-height: 50px; color: rgba(255,255,255,.88); white-space: nowrap; text-shadow: 1px 1px 1px rgba(0,0,0,.38), -1px -1px 0 rgba(0,0,0,.12); font-family: "Noto Sans CJK SC", "Noto Sans", sans-serif; font-weight: 300; }
```
